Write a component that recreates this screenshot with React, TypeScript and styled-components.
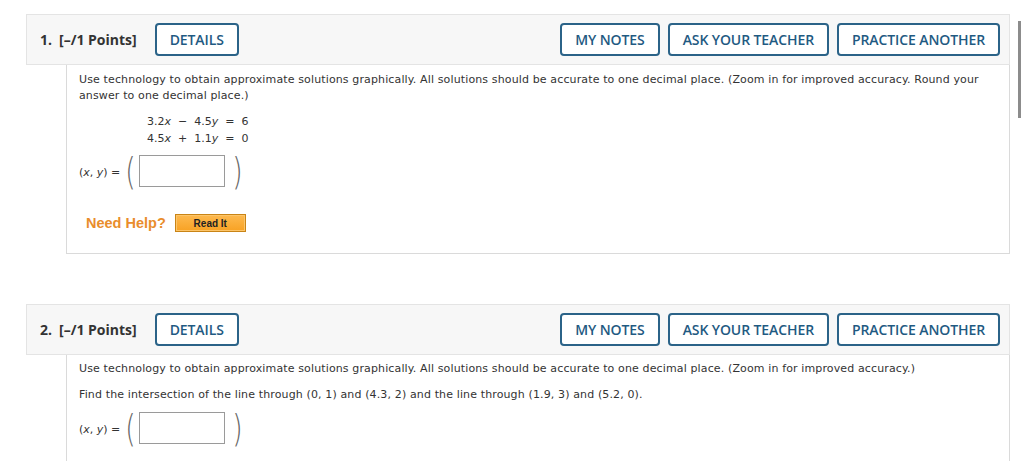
import styled, { createGlobalStyle } from 'styled-components';

const GlobalStyle = createGlobalStyle`
  body {
    margin: 0;
    background: #fff;
    font-family: "DejaVu Sans", Verdana, sans-serif;
    color: #333;
  }
`;

const Page = styled.div`
  position: relative;
  width: 1024px;
  height: 461px;
  overflow: hidden;
  padding: 14px 0 0 26px;
  box-sizing: border-box;
`;

const ScrollThumb = styled.div`
  position: absolute;
  left: 1018px;
  top: 21px;
  width: 3px;
  height: 97px;
  background: #8c8c8c;
`;

const Question = styled.section<{ $first?: boolean }>`
  width: 984px;
  margin-top: ${(p) => (p.$first ? 0 : 50)}px;
`;

const Header = styled.div`
  height: 51px;
  box-sizing: border-box;
  display: flex;
  align-items: center;
  padding: 0 9px 0 13px;
  background: #f7f7f7;
  border: 1px solid #e4e4e4;
`;

const Title = styled.div`
  font-family: "Open Sans", sans-serif;
  font-weight: 700;
  font-size: 14px;
  color: #333;
  display: flex;
  gap: 7px;
  margin-right: 18px;
`;

const Spacer = styled.div`
  flex: 1;
`;

const ActionButton = styled.button`
  height: 33px;
  box-sizing: border-box;
  padding: 0 13px;
  margin-left: 8px;
  background: #fff;
  border: 2px solid #2b6388;
  border-radius: 4px;
  font-family: "Open Sans", sans-serif;
  font-weight: 600;
  font-size: 14px;
  letter-spacing: -0.1px;
  color: #1f5a82;
  text-transform: uppercase;
  white-space: nowrap;
  &:first-of-type {
    margin-left: 0;
  }
`;

const Body = styled.div<{ $top: number; $bottom: number }>`
  margin-left: 40px;
  border: 1px solid #dadada;
  border-top: none;
  padding: ${(p) => p.$top}px 13px ${(p) => p.$bottom}px 12px;
  font-size: 11px;
  line-height: 16px;
  letter-spacing: 0.13px;
`;

const Para = styled.p<{ $gap?: number }>`
  margin: ${(p) => p.$gap ?? 0}px 0 0;
`;

const Equations = styled.div`
  margin: 9px 0 0 68px;
  line-height: 17px;
  letter-spacing: 0;
`;

const AnswerRow = styled.div<{ $gap: number }>`
  display: flex;
  align-items: center;
  margin-top: ${(p) => p.$gap}px;
  height: 32px;
`;

const Label = styled.span`
  margin-right: 3px;
  padding-top: 3px;
  letter-spacing: 0;
`;

const Paren = styled.span`
  font-size: 38px;
  font-weight: 200;
  line-height: 32px;
  color: #666;
  display: inline-block;
  transform: scaleX(0.7);
`;

const AnswerBox = styled.input`
  width: 86px;
  height: 32px;
  box-sizing: border-box;
  border: 1px solid #9a9a9a;
  margin: 0 5px 0 1px;
  padding: 0;
`;

const HelpRow = styled.div`
  display: flex;
  align-items: center;
  margin: 27px 0 0 7px;
  gap: 9px;
`;

const NeedHelp = styled.span`
  font-family: "Liberation Sans", Arial, sans-serif;
  font-weight: 700;
  font-size: 14.5px;
  letter-spacing: 0;
  color: #e98d2c;
`;

const ReadIt = styled.button`
  width: 71px;
  height: 18px;
  padding: 0;
  border: 1px solid #c98416;
  background: linear-gradient(#fdb94f, #f8a224);
  box-shadow: inset 0 0 0 1px #fcc56a;
  font-family: "Liberation Sans", Arial, sans-serif;
  font-weight: 700;
  font-size: 10px;
  color: #222;
`;

const V = styled.i`
  font-style: italic;
`;

const Headline = ({ num }: { num: number }) => (
  <Header>
    <Title>
      <span>{num}.</span>
      <span>[–/1 Points]</span>
    </Title>
    <ActionButton>Details</ActionButton>
    <Spacer />
    <ActionButton>My Notes</ActionButton>
    <ActionButton>Ask Your Teacher</ActionButton>
    <ActionButton>Practice Another</ActionButton>
  </Header>
);

const Answer = ({ gap }: { gap: number }) => (
  <AnswerRow $gap={gap}>
    <Label>
      (<V>x</V>, <V>y</V>) =
    </Label>
    <Paren>(</Paren>
    <AnswerBox type="text" />
    <Paren>)</Paren>
  </AnswerRow>
);

export default function App() {
  return (
    <>
      <GlobalStyle />
      <Page>
        <ScrollThumb />
        <Question $first>
          <Headline num={1} />
          <Body $top={7} $bottom={21}>
            <Para>
              Use technology to obtain approximate solutions graphically. All solutions should be
              accurate to one decimal place. (Zoom in for improved accuracy. Round your answer to
              one decimal place.)
            </Para>
            <Equations>
              <div>
                3.2<V>x</V> &nbsp;−&nbsp; 4.5<V>y</V> &nbsp;=&nbsp; 6
              </div>
              <div>
                4.5<V>x</V> &nbsp;+&nbsp; 1.1<V>y</V> &nbsp;=&nbsp; 0
              </div>
            </Equations>
            <Answer gap={8} />
            <HelpRow>
              <NeedHelp>Need Help?</NeedHelp>
              <ReadIt>Read It</ReadIt>
            </HelpRow>
          </Body>
        </Question>
        <Question>
          <Headline num={2} />
          <Body $top={6} $bottom={40}>
            <Para>
              Use technology to obtain approximate solutions graphically. All solutions should be
              accurate to one decimal place. (Zoom in for improved accuracy.)
            </Para>
            <Para $gap={10}>
              Find the intersection of the line through (0, 1) and (4.3, 2) and the line through
              (1.9, 3) and (5.2, 0).
            </Para>
            <Answer gap={9} />
          </Body>
        </Question>
      </Page>
    </>
  );
}
